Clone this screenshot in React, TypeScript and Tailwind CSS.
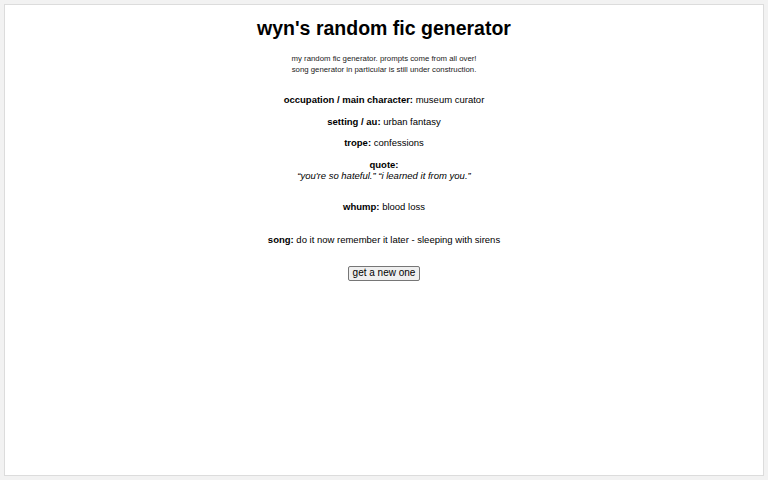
import React from 'react';

type Prompt = { label: string; value: string };

const rows: Prompt[] = [
  { label: 'occupation / main character:', value: 'museum curator' },
  { label: 'setting / au:', value: 'urban fantasy' },
  { label: 'trope:', value: 'confessions' },
];

export default function App() {
  return (
    <div className="h-[480px] w-[768px] bg-[#f2f2f2] p-[4px] font-['Liberation_Sans',Arial,sans-serif] text-black">
      <div className="flex h-full flex-col items-center border border-[#dcdcdc] bg-white pt-[11px] text-center">
        <h1 className="text-[19.5px] font-bold leading-[24px]">wyn's random fic generator</h1>

        <div className="mt-[13px] text-[7.8px] leading-[11px] text-[#222]">
          <p>my random fic generator. prompts come from all over!</p>
          <p>song generator in particular is still under construction.</p>
        </div>

        <div className="mt-[19px] flex flex-col items-center gap-[10.5px] text-[9.5px] leading-[11px]">
          {rows.map((r) => (
            <p key={r.label}>
              <b>{r.label}</b> {r.value}
            </p>
          ))}
          <div>
            <p className="font-bold">quote:</p>
            <p className="italic">“you're so hateful.” “i learned it from you.”</p>
          </div>
        </div>

        <p className="mt-[20px] text-[9.5px] leading-[11px]">
          <b>whump:</b> blood loss
        </p>

        <p className="mt-[22px] text-[9.5px] leading-[11px]">
          <b>song:</b> do it now remember it later - sleeping with sirens
        </p>

        <button className="mt-[21px] h-[15px] rounded-[2px] border border-[#767676] bg-[#efefef] px-[4px] text-[10px] leading-[12px]">
          get a new one
        </button>
      </div>
    </div>
  );
}
